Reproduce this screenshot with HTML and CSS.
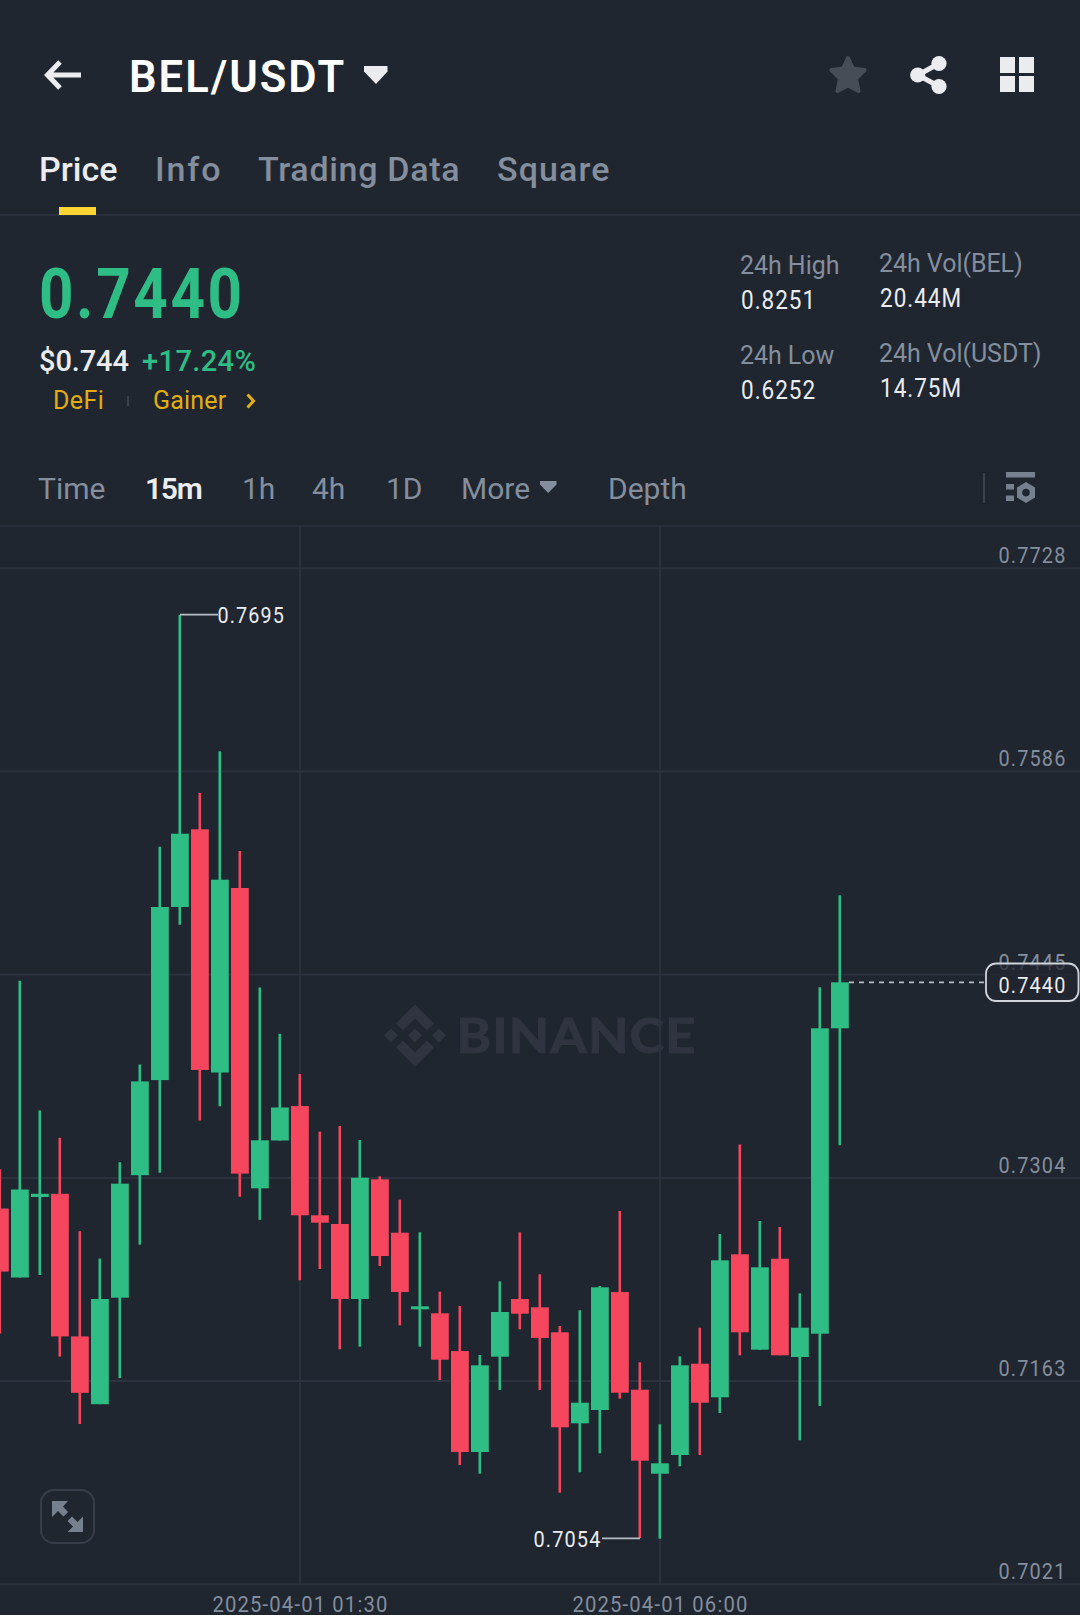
FILE: index.html
```html
<!DOCTYPE html>
<html lang="en">
<head>
<meta charset="utf-8">
<title>BEL/USDT</title>
<link rel="stylesheet" href="styles.css">
</head>
<body>
<header class="topbar">
  <svg class="back" width="38" height="30" viewBox="0 0 38 30"><path d="M37 15H5M16 2L3.5 15L16 28" fill="none" stroke="#eaecef" stroke-width="5"/></svg>
  <h1 class="pair">BEL/USDT</h1>
  <svg class="pair-caret" width="24" height="18" viewBox="0 0 24 18"><path d="M0 0H23.5V5.5L12 18L0 5.5Z" fill="#eaecef"/></svg>
  <div class="actions">
    <svg width="38" height="40" viewBox="0 0 38 40"><path d="M19 3L24 13.5L35.5 15L27 23.5L29.5 36L19 30.5L8.5 36L11 23.5L2.500 15L14 13.500Z" fill="#474d57" stroke="#474d57" stroke-width="4" stroke-linejoin="round"/></svg>
    <svg width="37" height="40" viewBox="0 0 37 40"><path d="M29 8.500L8 20L29 31.500" fill="none" stroke="#eaecef" stroke-width="5"/><g fill="#eaecef"><circle cx="29" cy="8.500" r="7.600"/><circle cx="7.700" cy="20" r="7.600"/><circle cx="29" cy="31.500" r="7.600"/></g></svg>
    <svg width="34" height="35" viewBox="0 0 34 35"><path d="M0 0H15V16H0ZM19 0H34V16H19ZM0 19H15V35H0ZM19 19H34V35H19Z" fill="#eaecef"/></svg>
  </div>
</header>
<nav class="tabs">
  <a class="tab active">Price</a><a class="tab info">Info</a><a class="tab trading">Trading Data</a><a class="tab square">Square</a>
</nav>
<section class="summary">
  <div class="quote">
    <div class="last">0.7440</div>
    <div class="sub"><span class="usd">$0.744</span><span class="change">+17.24%</span></div>
    <div class="tags"><span class="defi">DeFi</span><i></i><span class="gainer">Gainer</span>
      <svg width="10" height="16" viewBox="0 0 10 16"><path d="M1.500 1.500L7.500 8L1.500 14.500" fill="none" stroke="#e2ae10" stroke-width="3"/></svg></div>
  </div>
  <dl class="stats">
    <div><dt>24h High</dt><dd>0.8251</dd></div>
    <div><dt>24h Low</dt><dd>0.6252</dd></div>
  </dl>
  <dl class="stats vol">
    <div><dt>24h Vol(BEL)</dt><dd>20.44M</dd></div>
    <div><dt class="usdt">24h Vol(USDT)</dt><dd>14.75M</dd></div>
  </dl>
</section>
<nav class="intervals">
  <span>Time</span><span class="selected">15m</span><span>1h</span><span>4h</span><span>1D</span>
  <span class="more">More<svg width="17" height="12" viewBox="0 0 17 12"><path d="M0 0H16.500V3.500L8.200 12L0 3.500Z" fill="#848e9c"/></svg></span>
  <span>Depth</span>
  <i class="divider"></i>
  <svg width="30" height="31" viewBox="0 0 30 31"><path d="M0 0H29V5.500H0ZM0 12H8V17.500H0ZM0 23.500H8V29H0ZM20 10L29 15.500V25.500L20 31L11 25.500V15.500ZM20 16.800A3.800 3.800 0 1 0 20 24.400A3.800 3.800 0 1 0 20 16.800Z" fill="#76808f" fill-rule="evenodd"/></svg>
</nav>
<main class="chart">
  <svg id="plot" width="1080" height="1088" viewBox="0 527 1080 1088"></svg>
  <button class="expand" aria-label="Expand chart"><svg width="32" height="32" viewBox="0 0 32 32"><path d="M0 0H16L11 5.500L16 11L11.500 15.500L6 10L0 16ZM31 31V15.500L25.500 21L20 15.500L15.500 20L21 25.500L15.500 31Z" fill="#76808f"/></svg></button>
</main>
<script src="chart.js"></script>
</body>
</html>
```
FILE: styles.css
```css
* { box-sizing: border-box; }
body { margin: 0; width: 1080px; height: 1615px; overflow: hidden; background: #202630; color: #eaecef; font-family: Roboto, "Liberation Sans", sans-serif; }
svg { display: block; flex: none; }
.topbar { display: flex; align-items: center; height: 149px; padding: 0 46px 0 44px; }
.pair { margin: 7px 0 0 47px; width: 221px; font-size: 43.5px; line-height: 50px; font-weight: 600; letter-spacing: 2px; color: #fff; white-space: nowrap; }
.pair-caret { margin-left: 14px; }
.actions { display: flex; align-items: center; margin-left: auto; }
.actions svg:nth-child(2) { margin-left: 43px; }
.actions svg:nth-child(3) { margin-left: 53px; }
.tabs { display: grid; grid-template-columns: 116px 103px 239px 1fr; height: 67px; padding-left: 39px; border-bottom: 2px solid #2b313c; }
.tab { position: relative; font-size: 34px; line-height: 40px; font-weight: 500; color: #848e9c; white-space: nowrap; }
.tab.active { color: #eaecef; }
.tab.active::after { content: ""; position: absolute; left: 20px; top: 58px; width: 37px; height: 8px; background: #fcd535; }
.info { letter-spacing: 1.9px; }
.trading { letter-spacing: .7px; }
.square { letter-spacing: 1.1px; }
.summary { display: flex; height: 234px; padding: 0 38px 0 39px; }
.quote { flex: 1; padding-top: 37px; white-space: nowrap; }
.last { width: 240px; font-size: 70px; line-height: 82px; font-weight: 700; color: #2ebd85; letter-spacing: 3px; transform: scaleX(.86); transform-origin: left; }
.sub { display: flex; margin-top: 9px; font-size: 29px; line-height: 34px; font-weight: 500; }
.usd { width: 103px; letter-spacing: -.1px; }
.change { letter-spacing: .4px; color: #2ebd85; }
.tags { display: flex; align-items: center; margin-top: 7px; padding-left: 14px; font-size: 25px; line-height: 32px; color: #e2ae10; }
.defi { width: 74px; letter-spacing: .4px; }
.tags i { width: 2px; height: 10px; background: #3a404b; }
.gainer { width: 93px; margin-left: 24px; letter-spacing: .2px; }
.stats { display: flex; flex-direction: column; margin: 35px 0 0; width: 139px; font-size: 25px; line-height: 30px; white-space: nowrap; }
.stats > div { height: 90px; }
.stats.vol { width: 163px; margin-top: 33px; }
dt { color: #848e9c; letter-spacing: -.05px; }
dd { width: 100px; margin: 5px 0 0 1px; letter-spacing: 1.1px; transform: scaleX(.9); transform-origin: left; }
.intervals { display: grid; grid-template-columns: 107px 97px 70px 74px 75px 147px 374px 24px auto; align-items: center; height: 77px; padding-left: 38px; border-bottom: 2px solid #2b313c; font-size: 30px; line-height: 36px; color: #848e9c; }
.intervals span { padding-top: 3px; }
.intervals .selected { color: #eaecef; font-weight: 600; letter-spacing: -1.3px; }
.more { display: flex; align-items: center; gap: 10px; }
.more svg { margin-top: -5px; }
.divider { width: 2px; height: 30px; background: #3a404b; margin-left: 1px; }
.chart { position: relative; height: 1088px; }
.expand { position: absolute; left: 40px; top: 962px; width: 55px; height: 55px; padding: 10px; border: 2px solid #373d48; border-radius: 14px; background: none; }
.axis, .mark { font-size: 22.5px; letter-spacing: 1.3px; fill: #848e9c; }
.mark { fill: #eaecef; }
.brand { font-family: Lato, sans-serif; font-size: 47px; font-weight: 700; letter-spacing: 1px; stroke: #2f3440; stroke-width: 1px; }
```
FILE: chart.js
```js
// Each candle: direction, high, body top, body bottom, low (vertical plot units)
const candles = [
  ["d",1169.3,1208.5,1271.6,1333.5],["u",980.8,1189.5,1277.5,1277.5],["u",1110.4,1193.8,1197,1275],
  ["d",1137.8,1193.8,1336.4,1356.6],["d",1231.2,1336.4,1392.8,1424],["u",1258.6,1299,1404.2,1404.2],
  ["u",1162.2,1183.7,1297.7,1378.1],["u",1064.5,1081.4,1175.2,1244.7],["u",846.7,907,1080.1,1172.7],
  ["u",614.7,833.7,907,924.7],["d",793,829.3,1070,1120.5],["u",751.3,879.7,1072.5,1106.2],
  ["d",851,888,1173.6,1196.7],["u",987.5,1140.3,1188.3,1219.9],["u",1033.8,1107.5,1140.5,1140.5],
  ["d",1074,1106,1215.3,1280.3],["d",1131.7,1215.3,1222.7,1269],["d",1126,1224,1299,1349.3],
  ["u",1140,1177.7,1299,1346.7],["d",1176.3,1179.3,1256,1266],["d",1199.7,1232.7,1292,1325.3],
  ["u",1232.3,1306.3,1309.3,1346.7],["d",1291.7,1313.3,1359.7,1380],["d",1306,1351,1452,1465],
  ["u",1355,1365.3,1452,1473.7],["u",1281.3,1312,1356.7,1390],["d",1232.3,1299,1313.7,1329.3],
  ["d",1274.3,1307.3,1338,1390],["d",1326,1332.3,1427.3,1492.7],["u",1310.3,1402.7,1423.3,1472.3],
  ["u",1286,1287.3,1410,1453.3],["d",1211,1292,1392.7,1398.7],["d",1362.3,1389.7,1460.7,1538],
  ["u",1424.3,1463.3,1473.7,1538.7],["u",1356.3,1365.3,1455,1466.3],["d",1327.7,1363.7,1402.7,1455],
  ["u",1234,1260.3,1397.3,1413],["d",1144.5,1254.3,1332.3,1355.3],["u",1221,1267.3,1349.7,1349.7],
  ["d",1227,1258.7,1355.3,1355.3],["u",1293.3,1327.7,1357,1440.3],["u",987.3,1028.3,1333.7,1406],
  ["u",895.3,982.3,1028.3,1145.3]
];
const text = (cls, x, y, w, s) =>
  `<text class="${cls}" x="${x}" y="${y}" textLength="${w}" lengthAdjust="spacingAndGlyphs">${s}</text>`;
let out = `<g fill="#2f3440"><path d="M415 1004.500L434 1023.500L427 1030.500L415 1018.500L403 1030.500L396 1023.500ZM415 1066.500L434 1047.500L427 1040.500L415 1052.500L403 1040.500L396 1047.500ZM384 1035.500L391 1028.500L398 1035.500L391 1042.500ZM432 1035.500L439 1028.500L446 1035.500L439 1042.500ZM408 1035.500L415 1028.500L422 1035.500L415 1042.500Z"/>${text("brand", 456.5, 1052.5, 240, "BINANCE")}</g>`;
out += `<path d="M0 568.300H1080M0 771.500H1080M0 974.700H1080M0 1178H1080M0 1381H1080M0 1584.300H1080M300 527V1584M660 527V1584" stroke="#2d333e" stroke-width="1.800"/>`;
[["0.7728",563.2],["0.7586",766.2],["0.7445",969.7],["0.7304",1173.3],["0.7163",1376],["0.7021",1579]]
  .forEach(([s, y]) => { out += text("axis", 998.5, y, 68, s); });
out += text("axis", 212.5, 1612, 176, "2025-04-01 01:30") + text("axis", 572.5, 1612, 176, "2025-04-01 06:00");
candles.forEach(([dir, high, top, bottom, low], i) => {
  const color = dir === "u" ? "#2ebd85" : "#f6465d", x = i * 20;
  out += `<path d="M${x - .2} ${high}V${low}" stroke="${color}" stroke-width="2.600"/><rect x="${x - 9}" y="${top}" width="17.800" height="${bottom - top}" fill="${color}"/>`;
});
out += `<path d="M180 614.700H218M602 1538.300H640" stroke="#b7bdc6" stroke-width="1.800"/>`;
out += text("mark", 217.5, 623.2, 67.5, "0.7695") + text("mark", 533.5, 1547, 68, "0.7054");
out += `<path d="M849 982.300H985" stroke="#b7bdc6" stroke-width="1.800" stroke-dasharray="5 5"/>`;
out += `<rect x="986" y="963.500" width="92.500" height="37.500" rx="10" fill="#202630" fill-opacity=".75" stroke="#d0d4db" stroke-width="1.800"/>`;
out += text("mark", 998.5, 993.3, 68, "0.7440");
document.getElementById("plot").innerHTML = out;
```
